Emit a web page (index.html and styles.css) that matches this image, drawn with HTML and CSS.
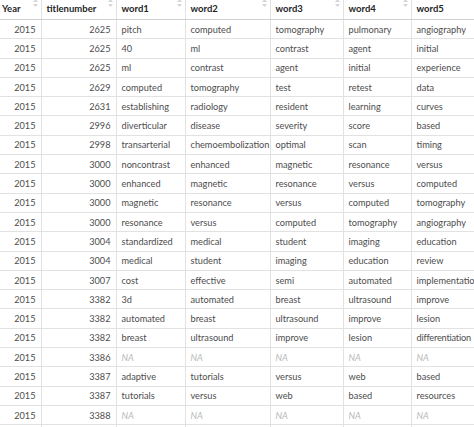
FILE: index.html
```html
<!DOCTYPE html>
<html>
<head>
<meta charset="utf-8">
<link rel="stylesheet" href="styles.css">
</head>
<body>
<div class="viewer">
<table class="grid">
<colgroup>
<col class="c-year"><col class="c-num"><col class="c-w1"><col class="c-w2"><col class="c-w3"><col class="c-w4"><col class="c-w5">
</colgroup>
<thead>
<tr>
<th>Year<span class="sort"><svg width="5" height="10" viewBox="0 0 5 10"><path d="M0 4 L2.5 1 L5 4Z M0 6 L2.5 9 L5 6Z" fill="#d6d6d6"/></svg></span></th>
<th>titlenumber<span class="sort"><svg width="5" height="10" viewBox="0 0 5 10"><path d="M0 4 L2.5 1 L5 4Z M0 6 L2.5 9 L5 6Z" fill="#d6d6d6"/></svg></span></th>
<th>word1<span class="sort"><svg width="5" height="10" viewBox="0 0 5 10"><path d="M0 4 L2.5 1 L5 4Z M0 6 L2.5 9 L5 6Z" fill="#d6d6d6"/></svg></span></th>
<th>word2<span class="sort"><svg width="5" height="10" viewBox="0 0 5 10"><path d="M0 4 L2.5 1 L5 4Z M0 6 L2.5 9 L5 6Z" fill="#d6d6d6"/></svg></span></th>
<th>word3<span class="sort"><svg width="5" height="10" viewBox="0 0 5 10"><path d="M0 4 L2.5 1 L5 4Z M0 6 L2.5 9 L5 6Z" fill="#d6d6d6"/></svg></span></th>
<th>word4<span class="sort"><svg width="5" height="10" viewBox="0 0 5 10"><path d="M0 4 L2.5 1 L5 4Z M0 6 L2.5 9 L5 6Z" fill="#d6d6d6"/></svg></span></th>
<th>word5<span class="sort"><svg width="5" height="10" viewBox="0 0 5 10"><path d="M0 4 L2.5 1 L5 4Z M0 6 L2.5 9 L5 6Z" fill="#d6d6d6"/></svg></span></th>
</tr>
</thead>
<tbody>
<tr><td class="n">2015</td><td class="n">2625</td><td>pitch</td><td>computed</td><td>tomography</td><td>pulmonary</td><td>angiography</td></tr>
<tr><td class="n">2015</td><td class="n">2625</td><td>40</td><td>ml</td><td>contrast</td><td>agent</td><td>initial</td></tr>
<tr><td class="n">2015</td><td class="n">2625</td><td>ml</td><td>contrast</td><td>agent</td><td>initial</td><td>experience</td></tr>
<tr><td class="n">2015</td><td class="n">2629</td><td>computed</td><td>tomography</td><td>test</td><td>retest</td><td>data</td></tr>
<tr><td class="n">2015</td><td class="n">2631</td><td>establishing</td><td>radiology</td><td>resident</td><td>learning</td><td>curves</td></tr>
<tr><td class="n">2015</td><td class="n">2996</td><td>diverticular</td><td>disease</td><td>severity</td><td>score</td><td>based</td></tr>
<tr><td class="n">2015</td><td class="n">2998</td><td>transarterial</td><td>chemoembolization</td><td>optimal</td><td>scan</td><td>timing</td></tr>
<tr><td class="n">2015</td><td class="n">3000</td><td>noncontrast</td><td>enhanced</td><td>magnetic</td><td>resonance</td><td>versus</td></tr>
<tr><td class="n">2015</td><td class="n">3000</td><td>enhanced</td><td>magnetic</td><td>resonance</td><td>versus</td><td>computed</td></tr>
<tr><td class="n">2015</td><td class="n">3000</td><td>magnetic</td><td>resonance</td><td>versus</td><td>computed</td><td>tomography</td></tr>
<tr><td class="n">2015</td><td class="n">3000</td><td>resonance</td><td>versus</td><td>computed</td><td>tomography</td><td>angiography</td></tr>
<tr><td class="n">2015</td><td class="n">3004</td><td>standardized</td><td>medical</td><td>student</td><td>imaging</td><td>education</td></tr>
<tr><td class="n">2015</td><td class="n">3004</td><td>medical</td><td>student</td><td>imaging</td><td>education</td><td>review</td></tr>
<tr><td class="n">2015</td><td class="n">3007</td><td>cost</td><td>effective</td><td>semi</td><td>automated</td><td>implementation</td></tr>
<tr><td class="n">2015</td><td class="n">3382</td><td>3d</td><td>automated</td><td>breast</td><td>ultrasound</td><td>improve</td></tr>
<tr><td class="n">2015</td><td class="n">3382</td><td>automated</td><td>breast</td><td>ultrasound</td><td>improve</td><td>lesion</td></tr>
<tr><td class="n">2015</td><td class="n">3382</td><td>breast</td><td>ultrasound</td><td>improve</td><td>lesion</td><td class="tight">differentiation</td></tr>
<tr><td class="n">2015</td><td class="n">3386</td><td class="na">NA</td><td class="na">NA</td><td class="na">NA</td><td class="na">NA</td><td class="na">NA</td></tr>
<tr><td class="n">2015</td><td class="n">3387</td><td>adaptive</td><td>tutorials</td><td>versus</td><td>web</td><td>based</td></tr>
<tr><td class="n">2015</td><td class="n">3387</td><td>tutorials</td><td>versus</td><td>web</td><td>based</td><td>resources</td></tr>
<tr><td class="n">2015</td><td class="n">3388</td><td class="na">NA</td><td class="na">NA</td><td class="na">NA</td><td class="na">NA</td><td class="na">NA</td></tr>
<tr class="blank"><td></td><td></td><td></td><td></td><td></td><td></td><td></td></tr>
</tbody>
</table>
</div>
</body>
</html>
```
FILE: styles.css
```css
html, body {
  margin: 0;
  padding: 0;
  background: #ffffff;
  overflow: hidden;
}
.viewer {
  width: 474px;
  height: 427px;
  overflow: hidden;
}
.grid {
  border-collapse: collapse;
  table-layout: fixed;
  width: 520px;
  font-family: "Lato", "Open Sans", sans-serif;
  font-size: 9.2px;
  color: #4d4d4d;
}
.c-year { width: 41px; }
.c-num { width: 75px; }
.c-w1 { width: 69px; }
.c-w2 { width: 85px; }
.c-w3 { width: 73px; }
.c-w4 { width: 68px; }
.c-w5 { width: 109px; }
.grid th {
  position: relative;
  height: 19.5px;
  padding: 0 4px 2px 5px;
  text-align: left;
  font-weight: 700;
  font-size: 9.5px;
  color: #1f1f1f;
  border-right: 1px solid #e2e2e2;
  border-bottom: 1px solid #d0d0d0;
  white-space: nowrap;
  box-sizing: border-box;
  vertical-align: middle;
}
.grid th:first-child { padding-left: 2px; }
.sort {
  position: absolute;
  right: 3px;
  top: -2px;
  line-height: 0;
}
.grid td {
  height: 19.3px;
  padding: 0 4px 0 5px;
  border-right: 1px solid #e2e2e2;
  border-bottom: 1px solid #e2e2e2;
  white-space: nowrap;
  overflow: hidden;
  box-sizing: border-box;
  vertical-align: middle;
}
.grid tbody tr { height: 19.3px; }
.grid td.n { text-align: right; padding-right: 5px; }
.grid td.tight { letter-spacing: -0.2px; }
.grid td.na {
  font-style: italic;
  color: #b8b8b8;
}
```
